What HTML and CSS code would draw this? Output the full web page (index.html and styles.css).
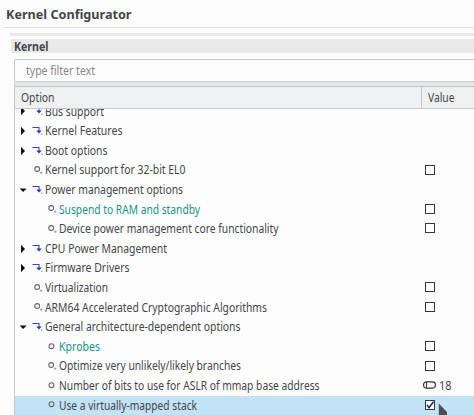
FILE: index.html
```html
<!DOCTYPE html>
<html lang="en">
<head>
<meta charset="utf-8">
<title>Kernel Configurator</title>
<link rel="stylesheet" href="styles.css">
</head>
<body>
<svg class="defs" aria-hidden="true">
  <symbol id="right" viewBox="0 0 8 10"><path d="M2 .8V9.2L6 5Z" fill="#111"/></symbol>
  <symbol id="down" viewBox="0 0 8 10"><path d="M.6 3.4H7.6L4.1 7Z" fill="#111"/></symbol>
  <symbol id="menu" viewBox="0 0 12 12"><path d="M.5 2.5H7V6" fill="none" stroke="#3145cc" stroke-width="1.1"/><path d="M4.2 5.4H9.8L7 8.4Z" fill="#2438c4"/><circle cx="9.8" cy="9.2" r=".8" fill="#8792c0"/></symbol>
  <symbol id="menuplain" viewBox="0 0 12 12"><path d="M.5 2.5H7V6" fill="none" stroke="#3145cc" stroke-width="1.1"/><path d="M4.2 5.4H9.8L7 8.4Z" fill="#2438c4"/></symbol>
  <symbol id="opt" viewBox="0 0 12 12"><circle cx="5.5" cy="5.2" r="2.4" fill="none" stroke="#666" stroke-width="1.1"/></symbol>
  <symbol id="optdep" viewBox="0 0 12 12"><circle cx="5.2" cy="5" r="2.4" fill="none" stroke="#666" stroke-width="1.1"/><path d="M8 8.7H10.4M9.2 7.5V9.9" stroke="#999" stroke-width=".9"/></symbol>
</svg>
<h1 class="title"><span class="fit" data-width="125.5">Kernel Configurator</span></h1>
<div class="strip"></div>
<h2 class="section"><span class="fit" data-width="34.5">Kernel</span></h2>
<div class="filter"><span class="fit" data-width="69">type filter text</span></div>
<div class="table">
  <div class="head"><div class="col-option"><span class="fit" data-width="33.5">Option</span></div><div class="col-value"><span class="fit" data-width="26.5">Value</span></div></div>
  <div class="body" id="body"></div>
</div>
<svg class="cursor" viewBox="0 0 12 14"><path d="M.8 .5V14H9V9Z" fill="#4b4f54"/></svg>
<script src="rows.js"></script>
</body>
</html>
```
FILE: styles.css
```css
* { box-sizing: border-box; }
body {
  margin: 0;
  width: 474px;
  height: 415px;
  overflow: hidden;
  background: #fdfdfd;
  color: #43464a;
  font: 12px/19.6px "Noto Sans", sans-serif;
  display: flex;
  flex-direction: column;
}
.defs { position: absolute; width: 0; height: 0; }
.fit { display: inline-block; white-space: nowrap; transform-origin: 0 50%; }
.title {
  margin: 0 0 5px 3px;
  padding-left: 3px;
  height: 28px;
  flex: none;
  border-bottom: 1px solid #e2e2e2;
  font-size: 13px;
  line-height: 28px;
}
.strip { flex: none; height: 3px; margin: 0 0 3px 10px; background: #e8e8e8; }
.section {
  flex: none;
  margin: 0 0 6px 11px;
  padding-left: 2.5px;
  height: 14px;
  background: #e9e9e9;
  font-size: 12px;
  line-height: 16px;
}
.filter {
  flex: none;
  margin-left: 14px;
  height: 23px;
  padding-left: 11px;
  border: 1px solid #c8cacc;
  border-right: 0;
  border-radius: 2px 0 0 2px;
  line-height: 21px;
  color: #878787;
}
.table { flex: 1; min-height: 0; margin-left: 14px; border-left: 1px solid #c6c8ca; border-top: 4px solid #e4e6e7; }
.head {
  display: flex;
  height: 23px;
  background: #eff0f1;
  border-top: 1px solid #c2c4c6;
  border-bottom: 1px solid #c8cacc;
  line-height: 22px;
}
.col-option { width: 407px; padding-left: 6px; border-right: 1px solid #c4c6c8; }
.col-value { padding-left: 6px; }
.body { height: 306px; overflow: hidden; }
.row { display: flex; align-items: center; height: 19.6px; padding-left: 4px; }
.row:first-child { margin-top: -7.4px; }
.arrow { width: 8px; height: 10px; margin-right: 5px; flex: none; }
.icon { width: 12px; height: 12px; margin-right: 1px; flex: none; }
.child .icon { margin-left: 14px; }
.label { width: 379px; white-space: nowrap; }
.child .label { width: 365px; }
.changed { color: #1a9488; }
.selected { background: #c2e2f5; }
.check { width: 10px; height: 10px; border: 1px solid #34383c; margin: 0 0 1px 1px; background: #fff; }
.check svg { display: block; width: 8px; height: 8px; }
.num { display: flex; align-items: center; gap: 3px; }
.num svg { width: 13px; height: 8px; margin: 0 0 1px -1px; }
.cursor { position: absolute; left: 438px; top: 403px; width: 12px; height: 14px; }
```
FILE: rows.js
```js
const rows = [
  ["Bus support", 59, "right", "menu"],
  ["Kernel Features", 77.5, "right", "menu"],
  ["Boot options", 62.5, "right", "menu"],
  ["Kernel support for 32-bit EL0", 140.5, "", "optdep", 0, "off"],
  ["Power management options", 138, "down", "menu"],
  ["Suspend to RAM and standby", 141, "", "optdep", 1, "off", "changed"],
  ["Device power management core functionality", 219.5, "", "optdep", 1, "off"],
  ["CPU Power Management", 122, "right", "menuplain"],
  ["Firmware Drivers", 84.5, "right", "menu"],
  ["Virtualization", 63, "", "optdep", 0, "off"],
  ["ARM64 Accelerated Cryptographic Algorithms", 222, "", "optdep", 0, "off"],
  ["General architecture-dependent options", 195.5, "down", "menu"],
  ["Kprobes", 41, "", "opt", 1, "off", "changed"],
  ["Optimize very unlikely/likely branches", 182, "", "optdep", 1, "off"],
  ["Number of bits to use for ASLR of mmap base address", 260.5, "", "opt", 1, "num"],
  ["Use a virtually-mapped stack", 138, "", "opt", 1, "on"]
];
const values = {
  off: '<div class="check"></div>',
  on: '<div class="check"><svg viewBox="0 0 8 8"><path d="M1 4L3 6.7L7.5 .7" fill="none" stroke="#14285a" stroke-width="1.5"/></svg></div>',
  num: '<div class="num"><svg viewBox="0 0 13 8"><rect x=".6" y=".8" width="11.8" height="6.4" rx="2.8" fill="none" stroke="#34383c" stroke-width="1.2"/><path d="M3.5 1V7" stroke="#34383c"/></svg><span class="fit" data-width="12.5">18</span></div>'
};
document.getElementById("body").innerHTML = rows.map(([label, width, arrow, icon, child, value, tone]) =>
  `<div class="row${child ? " child" : ""}${value === "on" ? " selected" : ""}">
    <svg class="arrow">${arrow ? `<use href="#${arrow}"/>` : ""}</svg>
    <svg class="icon"><use href="#${icon}"/></svg>
    <div class="label ${tone || ""}"><span class="fit" data-width="${width}">${label}</span></div>${values[value] || ""}
  </div>`).join("");

document.querySelectorAll(".fit").forEach(el => {
  el.style.transform = `scaleX(${el.dataset.width / el.getBoundingClientRect().width})`;
});
```
